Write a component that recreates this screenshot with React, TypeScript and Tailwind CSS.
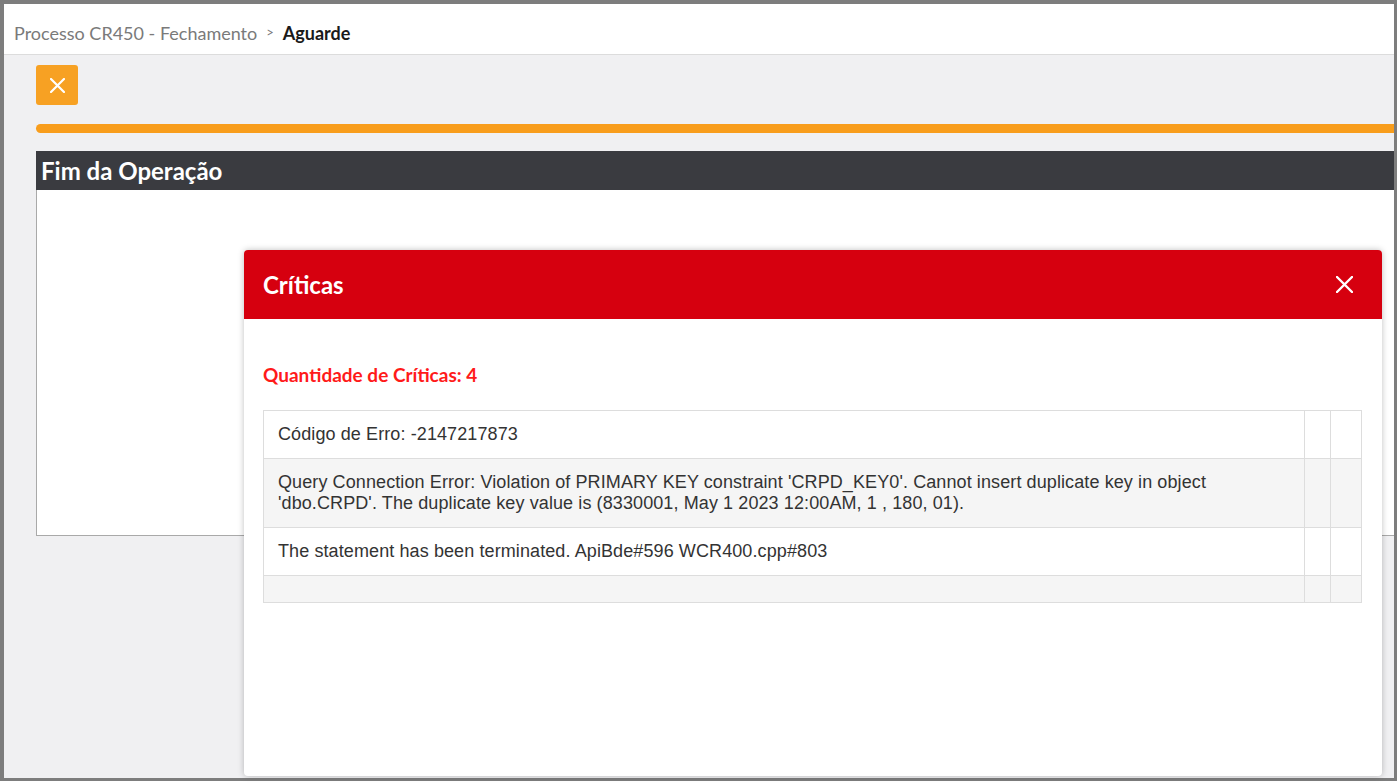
const ROWS = [
  { text: ['Código de Erro: -2147217873'], stripe: false },
  {
    text: [
      "Query Connection Error: Violation of PRIMARY KEY constraint 'CRPD_KEY0'. Cannot insert duplicate key in object",
      "'dbo.CRPD'. The duplicate key value is (8330001, May 1 2023 12:00AM, 1 , 180, 01).",
    ],
    stripe: true,
  },
  { text: ['The statement has been terminated. ApiBde#596 WCR400.cpp#803'], stripe: false },
  { text: [], stripe: true },
]

function Cross({ size, stroke }: { size: number; stroke: number }) {
  return (
    <svg width={size} height={size} viewBox={`0 0 ${size} ${size}`} fill="none">
      <path
        d={`M1 1L${size - 1} ${size - 1}M${size - 1} 1L1 ${size - 1}`}
        stroke="white"
        strokeWidth={stroke}
        strokeLinecap="round"
      />
    </svg>
  )
}

function CriticasModal() {
  return (
    <div className="absolute left-[244px] top-[250px] flex h-[526px] w-[1138px] flex-col overflow-hidden rounded-[4px] bg-white shadow-[0_0_6px_rgba(0,0,0,0.25)]">
      <div className="flex h-[69px] shrink-0 items-center justify-between bg-[#d6000f] pl-[19px] pr-[29px]">
        <h2 className="font-['Lato',sans-serif] text-[24px] font-bold text-white">Críticas</h2>
        <Cross size={17} stroke={2.4} />
      </div>
      <div className="px-[19px] pr-[20px] pt-[45px]">
        <p className="font-['Lato',sans-serif] text-[19px] font-bold leading-[22px] text-[#ff1a1a]">
          Quantidade de Críticas: 4
        </p>
        <table className="mt-[24px] w-full border-collapse font-['Liberation_Sans',Arial,sans-serif] text-[18px] leading-[21px] tracking-[0.1px] text-[#333]">
          <tbody>
            {ROWS.map((row, i) => (
              <tr key={i} className={row.stripe ? 'bg-[#f5f5f5]' : 'bg-white'}>
                <td className="h-[26px] border border-[#dddddd] px-[14px] py-[13px] align-top">
                  {row.text.map((line, j) => (
                    <div key={j} className="whitespace-nowrap">{line}</div>
                  ))}
                </td>
                <td className="w-[26px] border border-[#dddddd]" />
                <td className="w-[31px] border border-[#dddddd]" />
              </tr>
            ))}
          </tbody>
        </table>
      </div>
    </div>
  )
}

export default function App() {
  return (
    <div className="relative h-[784px] w-[1398px] overflow-hidden bg-white font-['Lato',sans-serif]">
      <div className="flex h-[781px] w-[1397px] flex-col border-[3px] border-l-[4px] border-t-[4px] border-[#7d7d7d]">
        <div className="flex h-[51px] shrink-0 items-center border-b border-[#dcdcdc] bg-white pl-[10px] pt-[8px] text-[18px]">
          <span className="text-[#7a7a7a]">Processo CR450 - Fechamento</span>
          <span className="mx-[9px] text-[13px] text-[#7a7a7a]">&gt;</span>
          <span className="font-bold text-[#1a1a1a]">Aguarde</span>
        </div>
        <div className="flex flex-1 flex-col bg-[#f0f0f2] pl-[32px] pt-[10px]">
          <button
            type="button"
            className="flex h-[40px] w-[42px] items-center justify-center rounded-[3px] bg-[#f7a123]"
          >
            <Cross size={15} stroke={2.2} />
          </button>
          <div className="mt-[19px] h-[9px] rounded-l-full bg-[#f89d1c]" />
          <div className="mt-[18px] flex h-[39px] items-center bg-[#3a3b40] pl-[5px]">
            <h1 className="text-[24px] font-bold text-white">Fim da Operação</h1>
          </div>
          <div className="h-[346px] border-b border-l border-[#a9a9a9] bg-white" />
        </div>
      </div>
      <CriticasModal />
    </div>
  )
}
